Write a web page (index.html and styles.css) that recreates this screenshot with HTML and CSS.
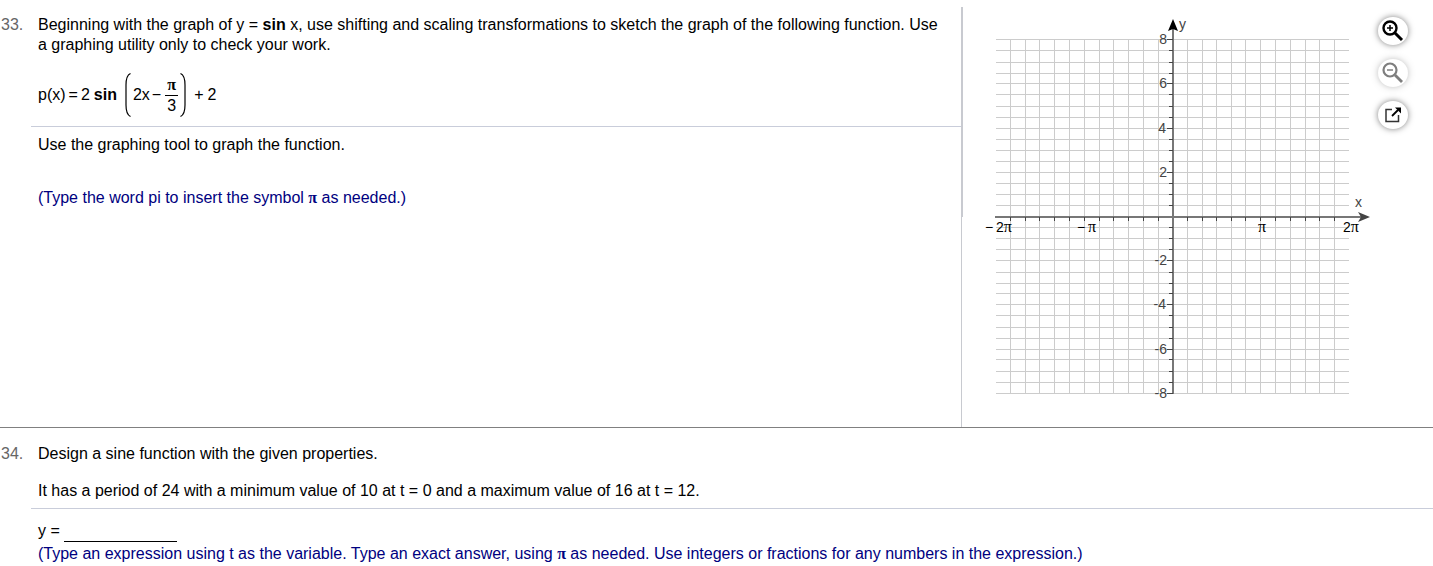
FILE: index.html
```
<!DOCTYPE html>
<html lang="en">
<head>
    <meta charset="UTF-8">
    <meta name="viewport" content="width=device-width, initial-scale=1.0">
    <title>Sine functions</title>
    <link rel="stylesheet" href="styles.css">
</head>
<body>
    <section class="exercise with-graph">
        <div class="number">33.</div>
        <div class="content">
            <div class="question">
                <p>Beginning with the graph of y = <b>sin</b> x, use shifting and scaling transformations to sketch the graph of the following function. Use a graphing utility only to check your work.</p>
                <div class="formula">
                    <span>p(x)<span class="op">=</span>2</span>
                    <b>sin</b>
                    <span class="group">
                        <svg class="paren" width="6" height="44" viewBox="0 0 6 44"><path d="M5.500 0.500C2 2 1 6 1 12V32C1 38 2 42 5.500 43.500"/></svg>
                        <span>2x</span>
                        <span>−</span>
                        <span class="fraction">
                            <span class="top pi">π</span>
                            <span class="bottom">3</span>
                        </span>
                        <svg class="paren" width="6" height="44" viewBox="0 0 6 44"><path d="M0.500 0.500C4 2 5 6 5 12V32C5 38 4 42 0.500 43.500"/></svg>
                    </span>
                    <span class="plus">+</span>
                    <span>2</span>
                </div>
            </div>
            <div class="answer">
                <p>Use the graphing tool to graph the function.</p>
                <p class="hint">(Type the word pi to insert the symbol <span class="pi">π</span> as needed.)</p>
            </div>
        </div>
        <div class="side">
            <svg class="graph" width="400" height="390" viewBox="980 12 400 390" role="img" aria-label="Coordinate grid">
                <!-- grid -->
                <path class="grid" d="M996 39.500H1349M996 50.500H1349M996 62.500H1349M996 73.500H1349M996 83.500H1349M996 94.500H1349M996 106.500H1349M996 117.500H1349M996 128.500H1349M996 139.500H1349M996 150.500H1349M996 161.500H1349M996 172.500H1349M996 183.500H1349M996 194.500H1349M996 205.500H1349M996 227.500H1349M996 238.500H1349M996 249.500H1349M996 260.500H1349M996 272.500H1349M996 283.500H1349M996 293.500H1349M996 304.500H1349M996 315.500H1349M996 327.500H1349M996 338.500H1349M996 349.500H1349M996 359.500H1349M996 371.500H1349M996 382.500H1349M996 393.500H1349"/>
                <path class="grid" d="M1010.500 39V393M1025.500 39V393M1039.500 39V393M1054.500 39V393M1069.500 39V393M1084.500 39V393M1099.500 39V393M1113.500 39V393M1128.500 39V393M1143.500 39V393M1158.500 39V393M1187.500 39V393M1202.500 39V393M1216.500 39V393M1231.500 39V393M1245.500 39V393M1260.500 39V393M1275.500 39V393M1290.500 39V393M1305.500 39V393M1319.500 39V393M1334.500 39V393"/>
                <!-- axes -->
                <path class="axis" d="M995 217H1362M1173 28V394"/>
                <path class="arrow dark" d="M1173 19L1178 31L1173 29L1168 31Z"/>
                <path class="arrow" d="M1370 217L1358 222L1361 217L1358 212Z"/>
                <!-- tick marks -->
                <path class="tick" d="M1010.500 217V221M1025.500 217V221M1039.500 217V221M1054.500 217V221M1069.500 217V221M1084.500 217V221M1099.500 217V221M1113.500 217V221M1128.500 217V221M1143.500 217V221M1158.500 217V221M1187.500 217V221M1202.500 217V221M1216.500 217V221M1231.500 217V221M1245.500 217V221M1260.500 217V221M1275.500 217V221M1290.500 217V221M1305.500 217V221M1319.500 217V221M1334.500 217V221"/>
                <path class="tick" d="M1167 39.500H1173M1169 50.500H1173M1169 62.500H1173M1169 73.500H1173M1167 83.500H1173M1169 94.500H1173M1169 106.500H1173M1169 117.500H1173M1167 128.500H1173M1169 139.500H1173M1169 150.500H1173M1169 161.500H1173M1167 172.500H1173M1169 183.500H1173M1169 194.500H1173M1169 205.500H1173M1169 227.500H1173M1169 238.500H1173M1169 249.500H1173M1167 260.500H1173M1169 272.500H1173M1169 283.500H1173M1169 293.500H1173M1167 304.500H1173M1169 315.500H1173M1169 327.500H1173M1169 338.500H1173M1167 349.500H1173M1169 359.500H1173M1169 371.500H1173M1169 382.500H1173M1167 393.500H1173"/>
                <g class="labels">
                    <text x="1179" y="29">y</text>
                    <text x="1355" y="207">x</text>
                    <g text-anchor="end">
                        <text x="1167" y="44">8</text>
                        <text x="1167" y="88">6</text>
                        <text x="1166" y="133">4</text>
                        <text x="1167" y="177">2</text>
                        <text x="1167" y="265">-2</text>
                        <text x="1166" y="309">-4</text>
                        <text x="1167" y="354">-6</text>
                        <text x="1167" y="398">-8</text>
                    </g>
                    <g class="dark">
                        <text x="985" y="232">−</text>
                        <text x="996" y="232">2<tspan class="pi">π</tspan></text>
                        <text x="1077" y="232">−</text>
                        <text x="1088" y="232" class="pi">π</text>
                        <text x="1258" y="232" class="pi">π</text>
                        <text x="1343" y="232">2<tspan class="pi">π</tspan></text>
                    </g>
                </g>
            </svg>
            <div class="tools">
                <button type="button" aria-label="Zoom in">
                    <svg width="22" height="22" viewBox="0 0 22 22"><circle cx="8" cy="8" r="6.500" stroke-width="2.400"/><path d="M13 13L20 20" stroke-width="3"/><path d="M5 8H11M8 5V11" stroke-width="1.500"/></svg>
                </button>
                <button type="button" aria-label="Zoom out" disabled>
                    <svg width="22" height="22" viewBox="0 0 22 22"><circle cx="8" cy="8" r="6.500" stroke-width="2.200"/><path d="M13 13L20 20" stroke-width="2.800"/><path d="M5 8H11" stroke-width="1.500"/></svg>
                </button>
                <button type="button" aria-label="Open in new window">
                    <svg width="22" height="22" viewBox="0 0 22 22"><path d="M10 5.500H4V17.500H16.500V11" stroke="#333" stroke-width="1.500"/><path d="M10 12L16 6" stroke-width="1.800"/><path d="M13 3.500H19V9.500Z" fill="#000" stroke="none"/></svg>
                </button>
            </div>
        </div>
    </section>

    <section class="exercise">
        <div class="number">34.</div>
        <div class="content">
            <div class="question">
                <p>Design a sine function with the given properties.</p>
                <p>It has a period of 24 with a minimum value of 10 at t = 0 and a maximum value of 16 at t = 12.</p>
            </div>
            <div class="answer">
                <div class="blank">
                    <label for="answer34">y =</label>
                    <input type="text" id="answer34">
                </div>
                <p class="hint">(Type an expression using t as the variable. Type an exact answer, using <span class="pi">π</span> as needed. Use integers or fractions for any numbers in the expression.)</p>
            </div>
        </div>
    </section>
</body>
</html>
```
FILE: styles.css
```
body {
    margin: 0;
    padding-top: 7px;
    background: #fff;
    color: #000;
    font-family: "Liberation Sans", Arial, sans-serif;
    font-size: 16px;
    line-height: 20px;
}
p {
    margin: 0;
}
.exercise {
    display: grid;
    grid-template-columns: 31px 1fr;
}
.with-graph {
    grid-template-columns: 31px 1fr 472px;
    border-bottom: 1px solid #808080;
}
.number {
    padding: 8px 0 0 1px;
    color: #666;
}
.exercise + .exercise .number,
.exercise + .exercise .question {
    padding-top: 16px;
}
.question {
    padding: 8px 14px 7px 7px;
    border-bottom: 1px solid #c9cdda;
}
.question p + p {
    margin-top: 17px;
}
.answer {
    padding: 8px 7px;
}
.hint {
    color: #000080;
}
.with-graph .hint {
    margin-top: 33px;
}
.op {
    margin: 0 3px;
}
.pi {
    font-family: "Liberation Serif", "Times New Roman", serif;
    font-weight: bold;
}
.formula {
    display: flex;
    align-items: center;
    gap: 4px;
    margin-top: 18px;
    padding-bottom: 2px;
}
.group {
    display: flex;
    align-items: center;
    gap: 2px;
    margin: 0 4px;
}
.paren {
    fill: none;
    stroke: #000;
    stroke-width: 1.2;
}
.fraction {
    display: flex;
    flex-direction: column;
    width: 13px;
    margin-left: 2px;
    text-align: center;
    line-height: 20px;
}
.fraction .top {
    border-bottom: 1px solid #000;
}
.side {
    display: flex;
    align-items: flex-start;
    border-left: 1px solid #c8cad0;
    background: linear-gradient(#c8cad0, #c8cad0) no-repeat 0 0 / 1px 210px;
}
.graph {
    margin: 5px 0 25px 18px;
    flex: none;
}
.grid {
    fill: none;
    stroke: #ccc;
}
.axis {
    fill: none;
    stroke: #777;
    stroke-width: 2;
}
.tick {
    stroke: #444;
}
.arrow {
    fill: #444;
}
.labels {
    font-size: 14px;
    fill: #444;
}
.dark {
    fill: #000;
}
.labels .pi {
    font-weight: normal;
    font-size: 16px;
}
.tools {
    display: flex;
    flex-direction: column;
    gap: 14px;
    margin: 10px 0 0 -2px;
}
.tools button {
    display: flex;
    align-items: center;
    justify-content: center;
    width: 30px;
    height: 28px;
    padding: 0;
    border: 0;
    border-radius: 50%;
    background: #fff;
    box-shadow: 0 0 6px rgba(0, 0, 0, 0.5);
    cursor: pointer;
}
.tools button:disabled {
    opacity: 0.5;
    cursor: default;
}
.tools svg {
    fill: none;
    stroke: #000;
}
.blank {
    display: flex;
    align-items: flex-end;
    gap: 4px;
    padding-top: 4px;
}
.blank input {
    width: 113px;
    height: 20px;
    padding: 0;
    border: 0;
    border-bottom: 1px solid #000;
    background: none;
    font: inherit;
    text-align: center;
}
.blank label {
    padding-bottom: 1px;
}
.blank + .hint {
    margin-top: 2px;
}
```
